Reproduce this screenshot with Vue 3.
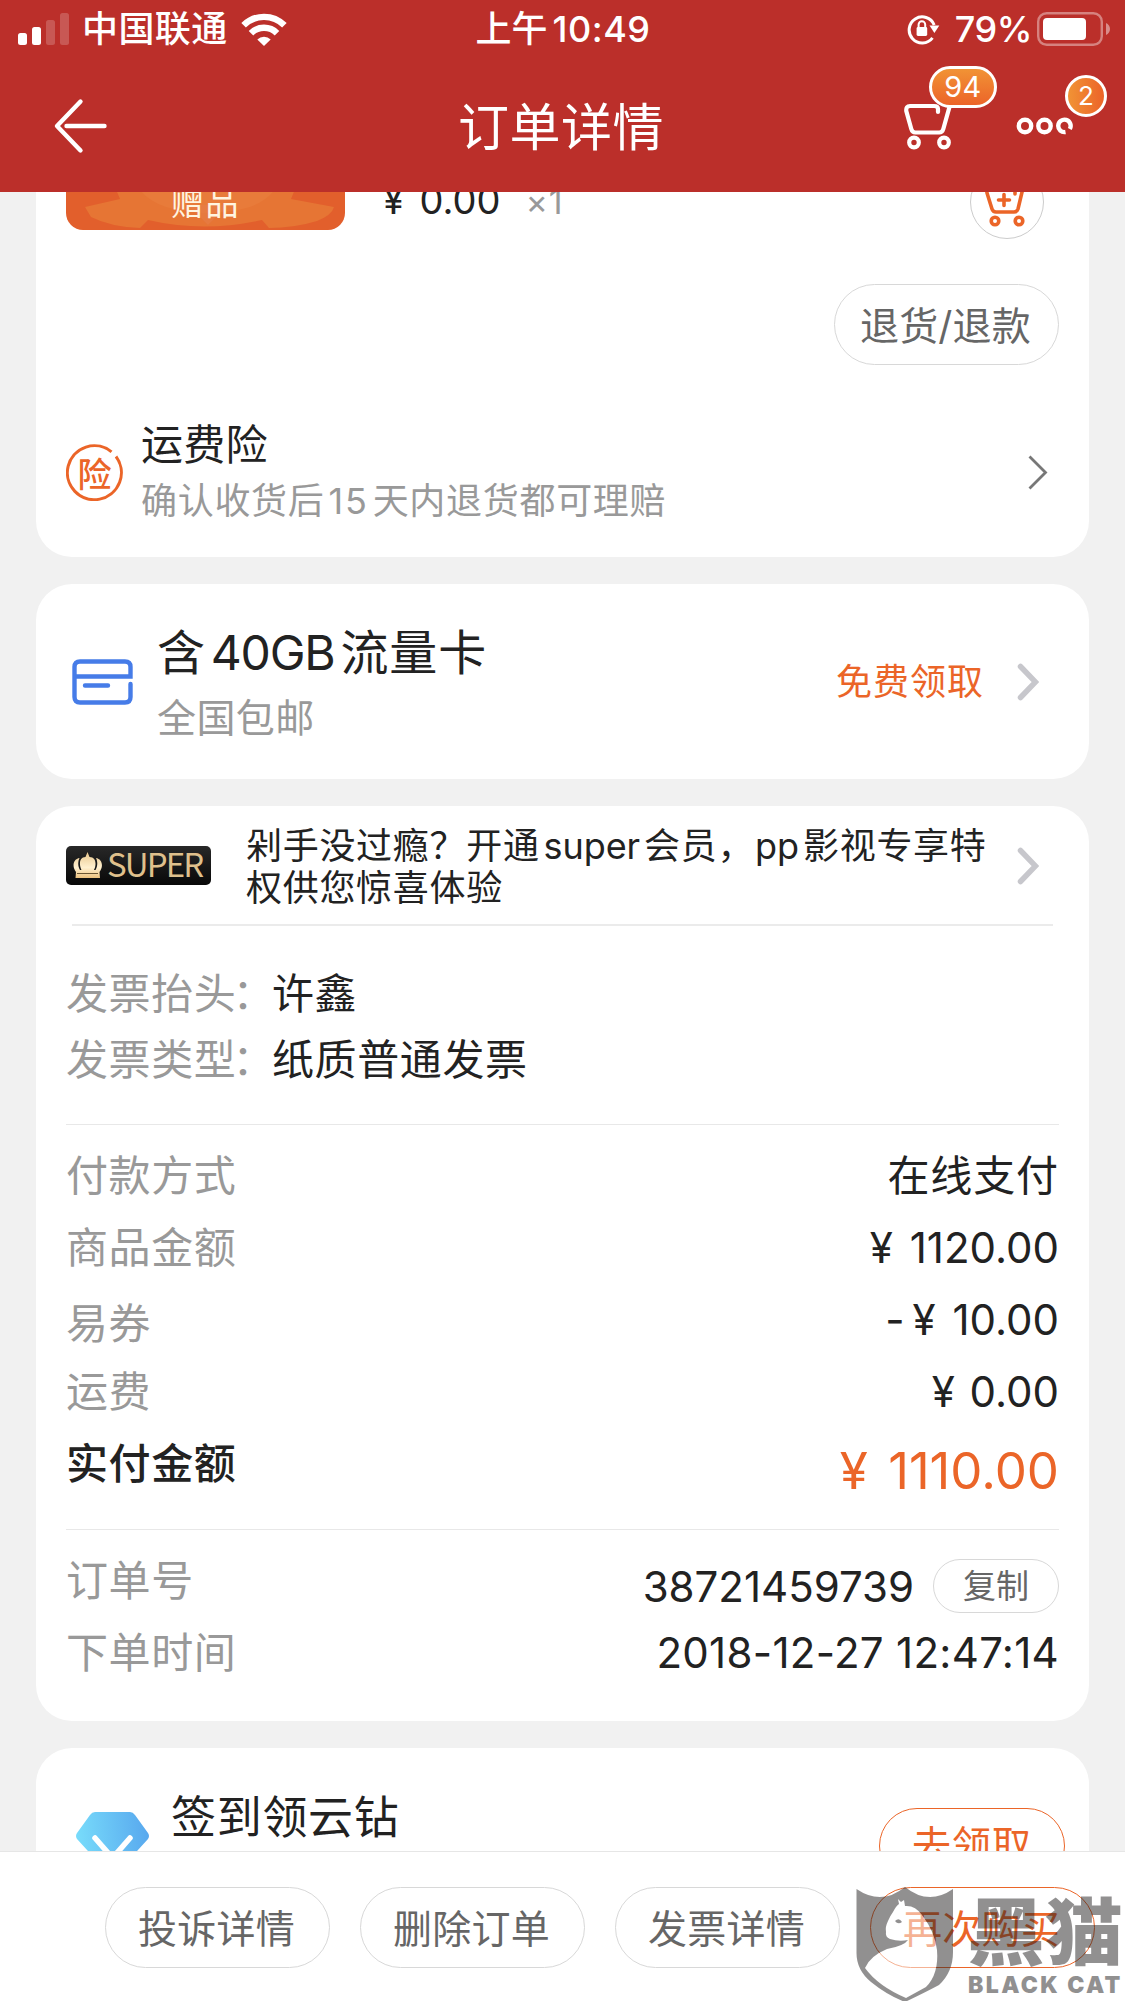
<script setup>
const invoiceRows = [
  { label: '发票抬头', value: '许鑫' },
  { label: '发票类型', value: '纸质普通发票' },
]
const payRows = [
  { label: '付款方式', value: '在线支付', cls: 'method' },
  { label: '商品金额', value: '¥ 1120.00' },
  { label: '易券', sign: '-', value: '¥ 10.00', cls: 'coupon' },
  { label: '运费', value: '¥ 0.00', cls: 'freight' },
]
const actions = ['投诉详情', '删除订单', '发票详情']
</script>

<template>
  <div class="page">
    <header class="header">
      <div class="status">
        <div class="side">
          <svg class="signal" width="51" height="32" viewBox="0 0 51 32" fill="#fff">
            <rect x="0" y="20" width="9" height="12" rx="2.5" />
            <rect x="14" y="14" width="9" height="18" rx="2.5" />
            <rect x="28" y="7" width="9" height="25" rx="2.5" opacity=".2" />
            <rect x="42" y="0" width="9" height="32" rx="2.5" opacity=".2" />
          </svg>
          <span class="carrier">中国联通</span>
          <svg class="wifi" width="46" height="33" viewBox="0 0 46 33">
            <g fill="none" stroke="#fff" stroke-width="6.4">
              <path d="M2.6 12.3a28.8 28.8 0 0 1 40.8 0" />
              <path d="M10 20.2a18.4 18.4 0 0 1 26 0" />
            </g>
            <path fill="#fff" d="M16.3 26.5a9.6 9.6 0 0 1 13.4 0L23 33z" />
          </svg>
        </div>
        <span class="time">上午<span class="clock">10:49</span></span>
        <div class="side right">
          <svg class="lock" width="33" height="32" viewBox="0 0 33 32">
            <path d="M25.5 24.8A13 13 0 1 1 27.2 12" fill="none" stroke="#fff" stroke-width="3" />
            <path d="M22.5 12.5h9.8l-4.9 7.5z" fill="#fff" />
            <rect x="9.6" y="14" width="10.6" height="9" rx="1.4" fill="#fff" />
            <path d="M11.6 14.5v-3a3.3 3.3 0 0 1 6.6 0v3" fill="none" stroke="#fff" stroke-width="2" />
          </svg>
          <span class="percent">79%</span>
          <svg class="battery" width="74" height="34" viewBox="0 0 74 34">
            <rect x="1.2" y="1.2" width="63.6" height="31.6" rx="8.5" fill="none" stroke="#fff" stroke-opacity=".4" stroke-width="2.4" />
            <rect x="6" y="6" width="43" height="22" rx="4" fill="#fff" />
            <path d="M69 11v12c2.5-1 4-3.5 4-6s-1.500-5-4-6z" fill="#fff" fill-opacity=".45" />
          </svg>
        </div>
      </div>
      <div class="nav">
        <svg class="back" width="54" height="56" viewBox="0 0 54 56" fill="none" stroke="#fff" stroke-width="4.4" stroke-linecap="round">
          <path d="M27.5 3.5 4 28l23.500 24.500M13.500 28h38" stroke-linejoin="round" />
        </svg>
        <h1>订单详情</h1>
        <div class="nav-right">
          <div class="cart">
            <svg width="48" height="48" viewBox="0 0 48 48" fill="none" stroke="#fff" stroke-width="4.2" stroke-linecap="round">
              <path d="M34 10V7q0-3-4-3H6Q1.800 4 2.300 9l5 18q1 3.500 4 3.500h24q3 0 4-3.500L46 3" />
              <circle cx="10" cy="40.5" r="4.8" />
              <circle cx="40" cy="40.5" r="4.8" />
            </svg>
            <span class="badge wide">94</span>
          </div>
          <div class="more">
            <svg width="57" height="18" viewBox="0 0 57 18" fill="none" stroke="#fff" stroke-width="4.4">
              <circle cx="9" cy="9" r="6.2" />
              <circle cx="28.5" cy="9" r="6.2" />
              <path d="M49.500 15a6.200 6.200 0 1 1 4.300-3" />
            </svg>
            <span class="badge">2</span>
          </div>
        </div>
      </div>
    </header>

    <main class="content">
      <section class="card first">
        <div class="gift">
          <div class="gift-banner">
            <svg class="gift-art" width="279" height="65" viewBox="0 0 279 65">
              <path d="M19 42 54 34 40 0H239l-14 34 43 8q-2 8-17 14-23 7-48 7l-7-8q-58 13-114 0l-8 8Q45 62 25 52z" fill="#e67534" />
              <path d="M68 0q-3 30 32 42 42 12 84 0 32-12 32-42z" fill="#e87b3a" />
              <path d="m122 40 20 20 20-20z" fill="#e67d49" opacity=".6" />
            </svg>
            <span>赠品</span>
          </div>
          <span class="gift-price">¥ 0.00</span>
          <span class="gift-qty">×1</span>
          <div class="add-cart">
            <svg width="40" height="44" viewBox="0 0 40 44" fill="none" stroke="#eb6528" stroke-width="3.6" stroke-linecap="round">
              <path d="M30 10V6q0-2-3-2H6Q1.500 4 2 9l5 16q1 3 4 3h18q3 0 4-3l5-21M13.500 16h11M19 10.500v11" />
              <circle cx="10" cy="37" r="3.8" />
              <circle cx="34" cy="37" r="3.8" />
            </svg>
          </div>
        </div>
        <button class="pill refund">退货/退款</button>
        <div class="insurance">
          <div class="ins-icon">
            <svg width="57" height="57" viewBox="0 0 57 57" fill="none" stroke="#eb6528" stroke-width="3">
              <path d="M45.500 7.800A27 27 0 1 0 50 12.500" />
            </svg>
            <span>险</span>
          </div>
          <div class="ins-text">
            <div class="t42 dark">运费险</div>
            <div class="t36 grey">确认收货后<span class="lat days">15</span>天内退货都可理赔</div>
          </div>
          <svg class="chev-thin" width="20" height="35" viewBox="0 0 20 35" fill="none" stroke="#777" stroke-width="2.8">
            <path d="m1.500 1.500 16 16-16 16" />
          </svg>
        </div>
      </section>

      <section class="card data">
        <svg class="data-icon" width="61" height="46" viewBox="0 0 61 46" fill="none" stroke="#467ce8" stroke-width="4.4" stroke-linecap="round">
          <path d="M58.500 25v13q0 5.500-5.500 5.500H8Q2.500 43.500 2.500 38V8Q2.500 2.500 8 2.500h45q5.500 0 5.500 5.500v9.500h-56M13 26.500h23" />
        </svg>
        <div class="data-text">
          <div class="t48 dark">含<span class="lat gb">40GB</span>流量卡</div>
          <div class="t39 grey">全国包邮</div>
        </div>
        <span class="free">免费领取</span>
        <svg class="chev" width="22" height="38" viewBox="0 0 22 38"><path d="m3.500 3.500 15 15.500-15 15.500" /></svg>
      </section>

      <section class="card order">
        <div class="super">
          <div class="super-badge">
            <svg width="30" height="29" viewBox="0 0 30 29">
              <defs>
                <linearGradient id="gold" x1="0" y1="0" x2="0" y2="1">
                  <stop offset="0" stop-color="#e8c68c" />
                  <stop offset=".6" stop-color="#fff0cf" />
                  <stop offset="1" stop-color="#edc27e" />
                </linearGradient>
              </defs>
              <path fill="url(#gold)" d="M14.500 1l2 5c7 0 7 8 4.500 13h1.500c2-3 2.500-8 .5-12 6 1 8 8 3.500 14l.5 6H2.500l.5-6C-1.500 15 .5 8 6.500 7c-2 4-1.500 9 .5 12h1.500C6 14 6 6 12.500 6z" />
              <path d="M4 22.500h21" stroke="#6b5632" stroke-width="1" />
            </svg>
            <span>SUPER</span>
          </div>
          <p class="super-text">剁手没过瘾？开通<span class="lat">super</span>会员，<span class="lat r">pp</span>影视专享特<br />权供您惊喜体验</p>
          <svg class="chev" width="22" height="38" viewBox="0 0 22 38"><path d="m3.500 3.500 15 15.500-15 15.500" /></svg>
        </div>

        <dl class="invoice">
          <div v-for="r in invoiceRows" :key="r.label">
            <dt>{{ r.label }}<span class="colon">：</span></dt>
            <dd>{{ r.value }}</dd>
          </div>
        </dl>

        <dl class="pay">
          <div v-for="r in payRows" :key="r.label" class="row" :class="r.cls">
            <dt>{{ r.label }}</dt>
            <dd><span v-if="r.sign" class="sign-minus">{{ r.sign }}</span>{{ r.value }}</dd>
          </div>
          <div class="row total">
            <dt>实付金额</dt>
            <dd>¥ 1110.00</dd>
          </div>
        </dl>

        <dl class="meta">
          <div class="row number">
            <dt>订单号</dt>
            <dd>38721459739</dd>
            <button class="copy">复制</button>
          </div>
          <div class="row">
            <dt>下单时间</dt>
            <dd class="stamp">2018-12-27 12:47:14</dd>
          </div>
        </dl>
      </section>

      <section class="card sign">
        <svg class="diamond" width="73" height="64" viewBox="0 0 73 64">
          <defs>
            <linearGradient id="gem" x1="0" y1=".4" x2="1" y2=".3">
              <stop offset="0" stop-color="#78dcfb" />
              <stop offset="1" stop-color="#58a8ee" />
            </linearGradient>
          </defs>
          <path fill="url(#gem)" d="M19 0h35q3 0 5 3l13 18q2 3 0 6L41 61q-4.500 4-9 0L1 27q-2-3 0-6L14 3q2-3 5-3z" />
          <path d="m19 26 17.500 20L54 26" fill="none" stroke="#fff" stroke-width="5.5" stroke-linecap="round" stroke-linejoin="round" />
        </svg>
        <span class="sign-title">签到领云钻</span>
        <button class="claim">去领取</button>
      </section>
    </main>

    <footer class="footer">
      <button v-for="a in actions" :key="a" class="pill">{{ a }}</button>
      <button class="pill primary">再次购买</button>
      <div class="mark">
        <svg width="98" height="116" viewBox="0 0 98 116">
          <path fill="#262324" d="M.5 2q25 17 48.500-2 23.500 19 48 2v63q0 20-14 33-15 8-34 17-18-7-34-20Q.5 83 .5 66z" />
          <path fill="#fff" d="m42 12 3 3 3-2 1 6q10-1 17 9 13 17 15 35 2 24-11 37l-20 11Q22 99 9 81q5-12 22-19 17-3 21-9-9 2-18-1-5-2-4-7-1-5 2-11 2-5 5-9 3-6 6-8z" />
          <path fill="#262324" d="M39 34q4-4 7 1-4 3-7-1z" />
        </svg>
        <div class="mark-text">
          <b class="mark-cn">黑猫</b>
          <b class="mark-en">BLACK CAT</b>
        </div>
      </div>
    </footer>
  </div>
</template>

<style>
body {
  margin: 0;
}
</style>

<style scoped>
* {
  box-sizing: border-box;
}
.page {
  width: 1125px;
  height: 2001px;
  overflow: hidden;
  display: flex;
  flex-direction: column;
  background: #f1f1f1;
  color: #222;
  font-family: Inter, "Noto Sans CJK SC", sans-serif;
  font-size: 42px;
  line-height: 1.2;
  white-space: nowrap;
}
svg {
  display: block;
  flex: none;
}
dl, dd, p, h1 {
  margin: 0;
}
button {
  font-family: inherit;
  line-height: 1.2;
  padding: 0;
  background: #fff;
  color: #666;
}

.header {
  height: 192px;
  flex: none;
  background: #bb2f2a;
  color: #fff;
  position: relative;
  z-index: 1;
}
.status {
  height: 58px;
  display: flex;
  justify-content: space-between;
  align-items: center;
  font-size: 36px;
  font-weight: 500;
  padding: 0 14px 0 18px;
}
.side {
  width: 430px;
  display: flex;
  align-items: center;
}
.side.right {
  justify-content: flex-end;
}
.carrier {
  margin-left: 13px;
  padding-top: 2px;
  width: 159px;
  letter-spacing: 0.4px;
}
.time {
  padding: 2px 3px 0 0;
}
.clock {
  margin-left: 5px;
  letter-spacing: 0.5px;
}
.lock {
  margin-right: 15px;
}
.percent {
  padding-top: 2px;
  letter-spacing: -0.5px;
}
.battery {
  margin-left: 5px;
}
.nav {
  height: 134px;
  display: flex;
  align-items: center;
  justify-content: space-between;
  padding: 2px 18px 0 53px;
}
.back {
  margin-right: 351px;
}
h1 {
  font-size: 51px;
  font-weight: 400;
  letter-spacing: 0.5px;
  padding-top: 3px;
  margin-right: auto;
}
.nav-right {
  display: flex;
  align-items: center;
}
.cart {
  position: relative;
  margin-right: 64px;
}
.more {
  position: relative;
  margin-right: 34px;
}
.badge {
  position: absolute;
  left: 49px;
  top: -42px;
  width: 42px;
  height: 42px;
  border: 3px solid #fff;
  border-radius: 21px;
  background: linear-gradient(90deg, #f19335, #ec6429);
  font-size: 26px;
  line-height: 36px;
  text-align: center;
}
.badge.wide {
  left: 25px;
  top: -36px;
  width: 68px;
  font-size: 29px;
  letter-spacing: 0.5px;
  background: linear-gradient(180deg, #f19335, #ec6429);
}

.content {
  height: 1659px;
  flex: none;
  overflow: hidden;
  padding: 0 36px;
  display: flex;
  flex-direction: column;
  gap: 27px;
}
.card {
  flex: none;
  background: #fff;
  border-radius: 36px;
  padding: 0 30px;
}
.first {
  height: 365px;
  border-radius: 0 0 36px 36px;
  display: flex;
  flex-direction: column;
}
.gift {
  display: flex;
  height: 74px;
  margin-top: -27px;
}
.gift-banner {
  position: relative;
  width: 279px;
  height: 65px;
  border-radius: 0 0 17px 17px;
  background: #e25f2c;
  overflow: hidden;
  text-align: center;
  color: #fff4e0;
  font-size: 33px;
  line-height: 76px;
  letter-spacing: 1.5px;
}
.gift-art {
  position: absolute;
  left: 0;
  top: 0;
}
.gift-banner span {
  position: relative;
}
.gift-price {
  margin-left: 38px;
  font-size: 38px;
  line-height: 71px;
  word-spacing: 5px;
}
.gift-qty {
  margin-left: 25px;
  color: #999;
  font-size: 34px;
  letter-spacing: 0.8px;
  line-height: 73px;
}
.add-cart {
  margin-left: auto;
  margin-right: 15px;
  width: 74px;
  height: 74px;
  border: 1px solid #ccc;
  border-radius: 50%;
  padding: 18px 0 0 14px;
}
.pill {
  width: 225px;
  height: 81px;
  border: 1px solid #d8d8d8;
  border-radius: 41px;
  padding: 3px 2px 0 0;
  font-size: 39px;
  letter-spacing: 0.2px;
  flex: none;
}
.refund {
  align-self: flex-end;
  margin-top: 45px;
}
.insurance {
  display: flex;
  align-items: center;
  height: 115px;
  margin-top: 50px;
  padding-right: 11px;
}
.ins-icon {
  position: relative;
  width: 57px;
  height: 57px;
  margin-right: 18px;
}
.ins-icon span {
  position: absolute;
  inset: 0;
  text-align: center;
  font-size: 34px;
  font-weight: 500;
  line-height: 61px;
  color: #eb6528;
}
.ins-text {
  flex: 1;
}
.t42 {
  font-size: 42px;
  line-height: 56px;
  letter-spacing: 0.2px;
}
.t36 {
  font-size: 36px;
  line-height: 56px;
  letter-spacing: 0.7px;
}
.t48 {
  font-size: 48px;
  line-height: 66px;
  letter-spacing: 0.8px;
}
.t39 {
  font-size: 39px;
  line-height: 64px;
  letter-spacing: 0.4px;
}
.grey {
  color: #999;
}
.lat {
  margin: 0 4px;
  letter-spacing: -0.1px;
}
.lat.r {
  margin-left: 1px;
}
.lat.gb {
  margin: 0 6px 0 5px;
  letter-spacing: -1.2px;
}
.lat.days {
  margin: 0 4px;
  letter-spacing: 1.8px;
}

.data {
  height: 195px;
  display: flex;
  align-items: center;
  padding: 0 50px 0 36px;
}
.data-text {
  flex: 1;
  margin-left: 24px;
  padding-top: 7px;
}
.free {
  color: #eb6528;
  font-size: 36px;
  letter-spacing: 1px;
  padding-top: 2px;
  margin-right: 33px;
}
.chev path {
  fill: none;
  stroke: #c7c7cc;
  stroke-width: 5.5;
  stroke-linecap: round;
  stroke-linejoin: miter;
}

.order {
  height: 915px;
}
.super {
  height: 120px;
  margin: 0 6px;
  border-bottom: 2px solid #ebebeb;
  display: flex;
  align-items: center;
  padding-right: 14px;
}
.super .chev {
  margin-top: 2px;
}
.super-badge {
  width: 145px;
  height: 39px;
  margin-left: -6px;
  border-radius: 5px;
  background: linear-gradient(#282828, #080808);
  display: flex;
  align-items: center;
  padding-left: 7px;
}
.super-badge span {
  font-family: "Noto Sans CJK SC", sans-serif;
  margin-left: 4px;
  margin-top: -3px;
  color: #dfc08c;
  font-size: 33px;
  line-height: 39px;
  letter-spacing: -1.9px;
}
.super-text {
  margin-left: 35px;
  margin-right: auto;
  padding-top: 4px;
  font-size: 36px;
  line-height: 42px;
  letter-spacing: 0.7px;
}
.invoice {
  padding-top: 35px;
  height: 199px;
  border-bottom: 1px solid #e8e8e8;
}
.invoice div {
  display: flex;
  line-height: 66px;
  letter-spacing: 0.6px;
}
.invoice dt {
  width: 206px;
}
.colon {
  margin-left: -4px;
}
dt {
  color: #999;
  letter-spacing: 0.6px;
}
.pay {
  padding-top: 15px;
  height: 405px;
  border-bottom: 1px solid #e8e8e8;
}
.row {
  display: flex;
  justify-content: space-between;
  line-height: 72px;
}
.pay dd {
  word-spacing: 5px;
}
.method dd {
  letter-spacing: 0.9px;
}
.freight dd {
  word-spacing: 3px;
}
.sign-minus {
  margin-right: 8px;
}
.coupon dt {
  padding-top: 4px;
  margin-bottom: -4px;
}
.total dt {
  font-weight: 500;
  color: #222;
}
.total dd {
  font-size: 51px;
  line-height: 85px;
  color: #eb6528;
  word-spacing: 6px;
}
.meta {
  padding-top: 15px;
}
.number dd {
  margin-left: auto;
  line-height: 84px;
  height: 72px;
}
.stamp {
  letter-spacing: 0.3px;
}
.copy {
  margin: 14px 0 0 19px;
  width: 126px;
  height: 54px;
  border: 1px solid #d8d8d8;
  border-radius: 27px;
  font-size: 33px;
  line-height: 50px;
}

.sign {
  height: 190px;
  display: flex;
  align-items: flex-start;
  padding: 0 24px 0 40px;
}
.diamond {
  margin-top: 64px;
}
.sign-title {
  margin-left: 22px;
  margin-top: 40px;
  font-size: 45px;
  line-height: 60px;
  letter-spacing: 0.7px;
}
.claim {
  margin-left: auto;
  margin-top: 60px;
  width: 186px;
  height: 76px;
  border: 1.5px solid #eb6528;
  border-radius: 38px;
  padding-bottom: 2px;
  font-size: 39px;
  line-height: 68px;
  letter-spacing: 1px;
  color: #eb6528;
}

.footer {
  position: relative;
  height: 150px;
  flex: none;
  background: #fff;
  border-top: 1px solid #e6e6e6;
  display: flex;
  gap: 30px;
  padding: 35px 0 0 105px;
}
.primary {
  border-color: #eb6528;
  color: #eb6528;
}
.mark {
  position: absolute;
  left: 856px;
  top: 35px;
  display: flex;
  opacity: 0.5;
}
.mark-text {
  margin-left: 13px;
  display: flex;
  flex-direction: column;
  color: #262324;
}
.mark-cn {
  font-family: "Noto Sans CJK SC", sans-serif;
  font-weight: 900;
  font-size: 78px;
  line-height: 80px;
  transform: scaleY(0.93);
}
.mark-en {
  font-size: 23px;
  font-weight: 900;
  line-height: 24px;
  letter-spacing: 2.4px;
  margin: 6px 0 0 1px;
}
</style>
